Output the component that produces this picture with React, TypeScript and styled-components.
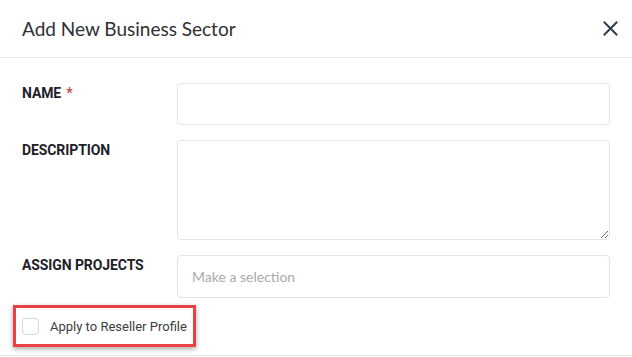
import React from "react"
import styled, { createGlobalStyle } from "styled-components"

const GlobalStyle = createGlobalStyle`
  body {
    margin: 0;
    background: #ffffff;
    font-family: Roboto, "Liberation Sans", sans-serif;
  }
  * {
    box-sizing: border-box;
  }
`

const Modal = styled.div`
  width: 632px;
  height: 357px;
  background: #ffffff;
  overflow: hidden;
`

const Header = styled.div`
  height: 58px;
  padding: 0 11px 0 22px;
  display: flex;
  align-items: center;
  justify-content: space-between;
  border-bottom: 1px solid #e9e9eb;
`

const Title = styled.h2`
  margin: 0;
  font-family: Lato, "Noto Sans", sans-serif;
  font-weight: 400;
  font-size: 19px;
  color: #2f3034;
`

const CloseButton = styled.button`
  width: 22px;
  height: 22px;
  padding: 0;
  border: none;
  background: none;
  display: flex;
  align-items: center;
  justify-content: center;
  cursor: pointer;
`

const Form = styled.div`
  padding: 25px 22px 0;
  display: flex;
  flex-direction: column;
  gap: 15px;
`

const Row = styled.div`
  display: grid;
  grid-template-columns: 155px 1fr;
  align-items: start;
`

const Label = styled.label`
  padding-top: 2px;
  font-size: 14px;
  font-weight: 700;
  color: #1f2128;
  letter-spacing: -0.1px;
`

const Required = styled.span`
  color: #b9504c;
  margin-left: 5px;
`

const TextInput = styled.input`
  height: 42px;
  width: 100%;
  border: 1px solid #e4e4e7;
  border-radius: 4px;
  padding: 0 14px;
  font-family: Lato, sans-serif;
  font-size: 14px;
  outline: none;
`

const TextArea = styled.textarea`
  display: block;
  height: 100px;
  width: 100%;
  border: 1px solid #e4e4e7;
  border-radius: 4px;
  padding: 10px 14px;
  font-family: Lato, sans-serif;
  font-size: 14px;
  outline: none;
  resize: vertical;
`

const Select = styled.div`
  height: 43px;
  border: 1px solid #e4e4e7;
  border-radius: 4px;
  padding: 0 14px;
  display: flex;
  align-items: center;
  font-family: Lato, sans-serif;
  font-size: 14px;
  color: #a9a9ae;
`

const OptionArea = styled.div`
  padding: 0 22px;
`

const Highlight = styled.div`
  margin: 7px 0 0 -9px;
  width: 183px;
  height: 42px;
  border: 3px solid #ea4242;
  box-shadow: 0 2px 5px rgba(0, 0, 0, 0.35);
  display: flex;
  align-items: center;
  gap: 11px;
  padding-left: 6px;
`

const Checkbox = styled.span`
  width: 17px;
  height: 17px;
  border: 1px solid #d6d6da;
  border-radius: 4px;
  background: #fff;
  flex-shrink: 0;
`

const CheckLabel = styled.span`
  font-size: 13px;
  color: #3c3d42;
`

const Footer = styled.div`
  margin-top: 8px;
  border-top: 1px solid #e9e9eb;
`

export default function App() {
  return (
    <>
      <GlobalStyle />
      <Modal>
        <Header>
          <Title>Add New Business Sector</Title>
          <CloseButton aria-label="Close">
            <svg width="15" height="15" viewBox="0 0 15 15">
              <path
                d="M1.5 1.5 L13.5 13.5 M13.5 1.5 L1.5 13.5"
                stroke="#2c3e50"
                strokeWidth="2"
                strokeLinecap="square"
              />
            </svg>
          </CloseButton>
        </Header>
        <Form>
          <Row>
            <Label>
              NAME<Required>*</Required>
            </Label>
            <TextInput />
          </Row>
          <Row>
            <Label>DESCRIPTION</Label>
            <TextArea />
          </Row>
          <Row>
            <Label>ASSIGN PROJECTS</Label>
            <Select>Make a selection</Select>
          </Row>
        </Form>
        <OptionArea>
          <Highlight>
            <Checkbox />
            <CheckLabel>Apply to Reseller Profile</CheckLabel>
          </Highlight>
        </OptionArea>
        <Footer />
      </Modal>
    </>
  )
}
